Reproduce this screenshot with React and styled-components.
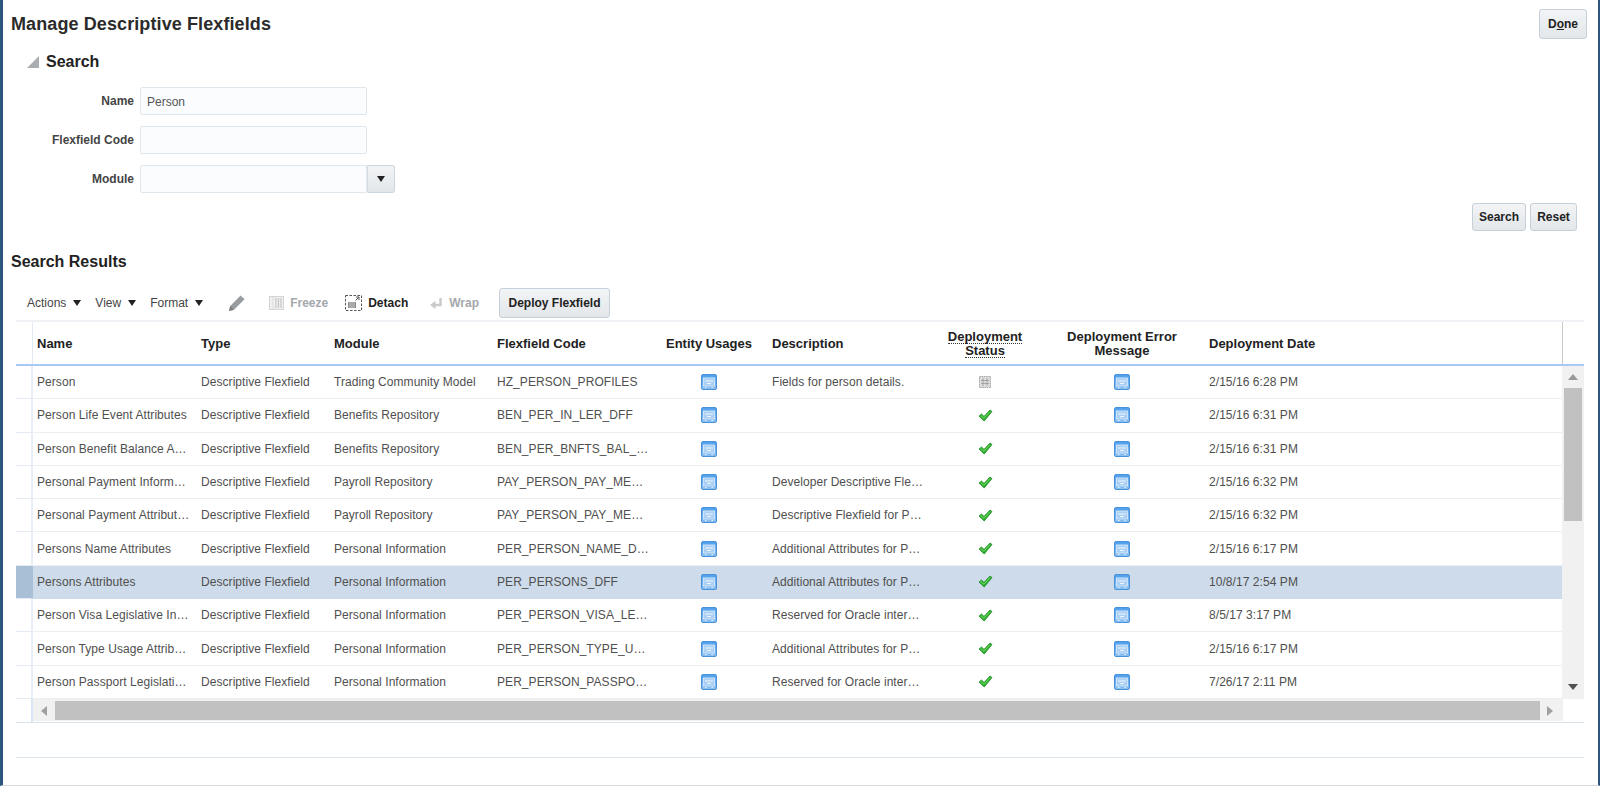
import React from "react";
import styled, { createGlobalStyle } from "styled-components";

const Global = createGlobalStyle`
  html, body { margin: 0; padding: 0; background: #fff; }
  body { font-family: "Liberation Sans", Arial, sans-serif; font-size: 12px; color: #333; }
`;

const COLS = "16px 165px 133px 163px 157px 118px 154px 130px 140px 1fr";

const Page = styled.div`
  box-sizing: border-box;
  width: 1600px;
  height: 786px;
  overflow: hidden;
  border-left: 3px solid #2c5580;
  border-right: 2px solid #2c5580;
  border-bottom: 1px solid #d9dde1;
`;
const TitleBar = styled.div`
  display: flex;
  justify-content: space-between;
  align-items: flex-start;
  padding: 9px 11px 0 8px;
`;
const Title = styled.h1`
  margin: 5px 0 0;
  font-size: 18px;
  line-height: 20px;
  font-weight: bold;
  color: #2b2b2b;
  letter-spacing: 0.1px;
`;
const Button = styled.button`
  box-sizing: border-box;
  height: ${p => p.$h || 28}px;
  width: ${p => p.$w}px;
  margin-left: ${p => p.$ml || 0}px;
  padding: 0;
  border: 1px solid #c5d0da;
  border-radius: 3px;
  background: linear-gradient(#f2f4f6, #e3e7ea);
  font: bold 12px "Liberation Sans", Arial, sans-serif;
  color: #222;
  u { text-decoration: underline; }
`;
const SearchHead = styled.div`
  display: flex;
  align-items: center;
  gap: 7px;
  margin: 13px 0 0 24px;
  height: 20px;
  font-size: 16px;
  font-weight: bold;
  color: #222;
`;
const Disclosure = styled.span`
  width: 0;
  height: 0;
  border-left: 12px solid transparent;
  border-bottom: 12px solid #a9adb1;
`;
const Form = styled.div`
  display: grid;
  grid-template-columns: 131px 1fr;
  grid-auto-rows: 28px;
  column-gap: 6px;
  row-gap: 11px;
  margin-top: 15px;
`;
const Label = styled.label`
  align-self: center;
  text-align: right;
  font-size: 12px;
  font-weight: bold;
  color: #444;
`;
const FieldRow = styled.div`
  display: flex;
`;
const Input = styled.div`
  box-sizing: border-box;
  width: 227px;
  height: 28px;
  padding: 0 6px;
  line-height: 28px;
  background: #fbfcfe;
  border: 1px solid #dfe6ec;
  border-radius: 2px;
  font-size: 12px;
  color: #555;
`;
const SelectBtn = styled.div`
  box-sizing: border-box;
  width: 28px;
  height: 28px;
  display: flex;
  align-items: center;
  justify-content: center;
  border: 1px solid #ccd5dd;
  border-left: 1px solid #d5dbe0;
  border-radius: 0 3px 3px 0;
  background: linear-gradient(#f2f4f6, #e3e7ea);
`;
const Arrow = styled.span`
  display: inline-block;
  width: 0;
  height: 0;
  border-left: 4.5px solid transparent;
  border-right: 4.5px solid transparent;
  border-top: 6px solid #222;
`;
const SearchActions = styled.div`
  display: flex;
  justify-content: flex-end;
  gap: 4px;
  margin-top: 10px;
  padding-right: 21px;
`;
const SectionTitle = styled.h2`
  margin: 21px 0 0 8px;
  font-size: 16px;
  line-height: 20px;
  font-weight: bold;
  color: #222;
`;
const Toolbar = styled.div`
  display: flex;
  align-items: center;
  height: 30px;
  margin: 16px 0 0 24px;
`;
const Menu = styled.span`
  display: inline-flex;
  align-items: center;
  gap: 7px;
  margin-right: ${p => p.$mr ?? 14}px;
  font-size: 12px;
  color: #444;
`;
const Tool = styled.span`
  display: inline-flex;
  align-items: center;
  gap: ${p => p.$gap || 6}px;
  margin-left: ${p => p.$ml || 0}px;
  font-size: 12px;
  font-weight: bold;
  color: ${p => (p.$off ? "#a4a8ac" : "#222")};
`;
const TableWrap = styled.div`
  margin: 2px 14px 0 13px;
  border-top: 2px solid #eef0f3;
`;
const HeaderRow = styled.div`
  display: grid;
  grid-template-columns: ${COLS} 22px;
  height: 42px;
  border-bottom: 2px solid #a9c9f2;
  font-size: 13px;
  font-weight: bold;
  color: #222;
`;
const HeadCell = styled.div`
  display: flex;
  flex-direction: column;
  justify-content: center;
  align-items: ${p => (p.$center ? "center" : "flex-start")};
  padding-left: ${p => (p.$center ? 0 : p.$inset || 5)}px;
  padding-top: 2px;
  padding-right: ${p => p.$shift || 0}px;
  line-height: 14px;
  text-align: center;
  white-space: nowrap;
  border-left: ${p => (p.$gutterEdge ? "1px solid #e3eaf2" : "none")};
`;
const Dotted = styled.span`
  border-bottom: 1px dotted #333;
  line-height: 13px;
`;
const EndCell = styled.div`
  border-left: 1px solid #c8c8c8;
`;
const BodyFrame = styled.div`
  display: flex;
  height: 333px;
`;
const Rows = styled.div`
  flex: 1;
  display: grid;
  grid-auto-rows: 33.3px;
`;
const Row = styled.div`
  display: grid;
  grid-template-columns: ${COLS};
  font-size: 12px;
  letter-spacing: 0.06px;
  color: #4f4f4f;
  background: ${p => (p.$selected ? "#cddbea" : "transparent")};
`;
const Gutter = styled.div`
  background: ${p => (p.$selected ? "#a9bfd6" : "#fff")};
  border-bottom: 1px solid #e3eaf2;
  border-right: 2px solid ${p => (p.$selected ? "#a9bfd6" : "#e8eef5")};
  margin-right: -1px;
`;
const Cell = styled.div`
  display: flex;
  align-items: center;
  justify-content: ${p => (p.$center ? "center" : "flex-start")};
  padding-left: ${p => (p.$center ? 0 : p.$inset || 5)}px;
  padding-right: ${p => p.$shift || 0}px;
  white-space: nowrap;
  overflow: hidden;
  border-bottom: 1px solid ${p => (p.$selected ? "#cddbea" : "#eceef0")};
`;
const VTrack = styled.div`
  box-sizing: border-box;
  width: 22px;
  height: 333px;
  padding: 0 2px;
  background: #f1f1f1;
  display: flex;
  flex-direction: column;
  align-items: center;
`;
const VThumb = styled.div`
  width: 18px;
  height: 133px;
  background: #c1c1c1;
  margin-bottom: auto;
`;
const ArrowUp = styled.span`
  width: 0;
  height: 0;
  margin: 8px 0 8px;
  border-left: 5px solid transparent;
  border-right: 5px solid transparent;
  border-bottom: 6px solid #999;
`;
const ArrowDown = styled.span`
  width: 0;
  height: 0;
  margin: 0 0 9px;
  border-left: 5px solid transparent;
  border-right: 5px solid transparent;
  border-top: 6px solid #505050;
`;
const HScrollRow = styled.div`
  display: flex;
  height: 23px;
  border-bottom: 1px solid #d8e2ea;
`;
const HGutter = styled.div`
  width: 15px;
  border-right: 2px solid #d8e6f7;
`;
const HTrack = styled.div`
  box-sizing: border-box;
  width: 1530px;
  height: 22px;
  padding-top: 1px;
  display: flex;
  align-items: center;
  background: #f1f1f1;
`;
const HThumb = styled.div`
  width: 1485px;
  height: 19px;
  background: #c1c1c1;
`;
const ArrowLeft = styled.span`
  width: 0;
  height: 0;
  margin: 0 8px 0 8px;
  border-top: 5px solid transparent;
  border-bottom: 5px solid transparent;
  border-right: 6px solid #a0a0a0;
`;
const ArrowRight = styled.span`
  width: 0;
  height: 0;
  margin: 0 0 0 7px;
  border-top: 5px solid transparent;
  border-bottom: 5px solid transparent;
  border-left: 6px solid #a0a0a0;
`;
const FootLine = styled.div`
  height: 1px;
  margin: 34px 14px 0 13px;
  background: #dde5ec;
`;

const BlueIcon = () => (
  <svg width="16" height="16" viewBox="0 0 16 16">
    <defs>
      <linearGradient id="bi" x1="0" y1="0" x2="0" y2="1">
        <stop offset="0" stopColor="#4f9fec" />
        <stop offset="1" stopColor="#8dc1f1" />
      </linearGradient>
    </defs>
    <rect x="0.5" y="0.5" width="15" height="15" rx="1.5" fill="url(#bi)" stroke="#4a92dc" />
    <rect x="2.5" y="4" width="11" height="8" fill="#a9cff4" stroke="#dcecfb" strokeWidth="0.8" />
    <path d="M4 7h8M6 9.5h4" stroke="#eef6fd" strokeWidth="1" />
    <path d="M4 13.5h1.5M10.5 13.5H12" stroke="#e8f2fb" strokeWidth="1" />
  </svg>
);
const Check = () => (
  <svg width="15" height="13" viewBox="0 0 15 13">
    <path d="M1 7l2.5-2 2.5 2.4L12 1l2 1.6L6.2 12z" fill="#2fae2f" stroke="#1e8a2a" strokeWidth="0.8" strokeLinejoin="round" />
    <path d="M2.5 6.6L6 9.2 12 2.6" fill="none" stroke="#6fdc5c" strokeWidth="1" />
  </svg>
);
const GreyDoc = () => (
  <svg width="12" height="12" viewBox="0 0 12 12">
    <rect x="0.5" y="0.5" width="11" height="11" fill="#dcdcdc" stroke="#a8a8a8" strokeDasharray="1.5 0.7" />
    <path d="M4 2v8M8 2v8M2 4.5h8M2 7.5h8" stroke="#9a9a9a" strokeWidth="0.8" />
  </svg>
);
const Pencil = () => (
  <svg width="18" height="18" viewBox="0 0 18 18">
    <path d="M1 17l1.2-5L12.6 1.6l4 3.6L6 15.8z" fill="#9a9da0" />
    <path d="M1 17l1.2-5 3.8 3.8z" fill="#7d8083" />
  </svg>
);
const FreezeIcon = () => (
  <svg width="15" height="14" viewBox="0 0 15 14">
    <rect x="0.5" y="0.5" width="14" height="13" fill="#f0f0f0" stroke="#d4d4d4" />
    <path d="M4 1v12" stroke="#cfcfcf" strokeDasharray="1.5 1" />
    <path d="M7 2v10M9.5 2v10M12 2v10" stroke="#c6c6c6" strokeWidth="1.2" />
  </svg>
);
const DetachIcon = () => (
  <svg width="17" height="16" viewBox="0 0 17 16">
    <rect x="0.5" y="0.5" width="16" height="15" fill="none" stroke="#555" strokeDasharray="2.5 1.5" />
    <path d="M10.5 5.5L14 2M11 2h3v3" fill="none" stroke="#555" strokeWidth="1" />
    <rect x="3" y="7" width="8" height="6" fill="#8a8a8a" />
    <path d="M5 7v6M7 7v6M9 7v6" stroke="#e6e6e6" strokeWidth="0.7" />
  </svg>
);
const WrapIcon = () => (
  <svg width="14" height="13" viewBox="0 0 14 13">
    <path d="M11.5 1v7H6" fill="none" stroke="#c9c9c9" strokeWidth="2.4" />
    <path d="M6.5 4v8L1 8z" fill="#c9c9c9" />
  </svg>
);

const DF = "Descriptive Flexfield";
const PI = "Personal Information";
const D = "2/15/16 ";
const data = [
  ["Person", "Trading Community Model", "HZ_PERSON_PROFILES", "Fields for person details.", D + "6:28 PM", true],
  ["Person Life Event Attributes", "Benefits Repository", "BEN_PER_IN_LER_DFF", "", D + "6:31 PM"],
  ["Person Benefit Balance A…", "Benefits Repository", "BEN_PER_BNFTS_BAL_…", "", D + "6:31 PM"],
  ["Personal Payment Inform…", "Payroll Repository", "PAY_PERSON_PAY_ME…", "Developer Descriptive Fle…", D + "6:32 PM"],
  ["Personal Payment Attribut…", "Payroll Repository", "PAY_PERSON_PAY_ME…", "Descriptive Flexfield for P…", D + "6:32 PM"],
  ["Persons Name Attributes", PI, "PER_PERSON_NAME_D…", "Additional Attributes for P…", D + "6:17 PM"],
  ["Persons Attributes", PI, "PER_PERSONS_DFF", "Additional Attributes for P…", "10/8/17 2:54 PM"],
  ["Person Visa Legislative In…", PI, "PER_PERSON_VISA_LE…", "Reserved for Oracle inter…", "8/5/17 3:17 PM"],
  ["Person Type Usage Attrib…", PI, "PER_PERSON_TYPE_U…", "Additional Attributes for P…", D + "6:17 PM"],
  ["Person Passport Legislati…", PI, "PER_PERSON_PASSPO…", "Reserved for Oracle inter…", "7/26/17 2:11 PM"],
];

export default function App() {
  return (
    <Page>
      <Global />
      <TitleBar>
        <Title>Manage Descriptive Flexfields</Title>
        <Button $w={48} $h={30}>D<u>o</u>ne</Button>
      </TitleBar>
      <SearchHead><Disclosure />Search</SearchHead>
      <Form>
        <Label>Name</Label>
        <FieldRow><Input>Person</Input></FieldRow>
        <Label>Flexfield Code</Label>
        <FieldRow><Input /></FieldRow>
        <Label>Module</Label>
        <FieldRow><Input /><SelectBtn><Arrow /></SelectBtn></FieldRow>
      </Form>
      <SearchActions>
        <Button $w={54}>Search</Button>
        <Button $w={47}>Reset</Button>
      </SearchActions>
      <SectionTitle>Search Results</SectionTitle>
      <Toolbar>
        <Menu>Actions <Arrow /></Menu>
        <Menu>View <Arrow /></Menu>
        <Menu $mr={0}>Format <Arrow /></Menu>
        <Tool $ml={25}><Pencil /></Tool>
        <Tool $ml={23} $off><FreezeIcon />Freeze</Tool>
        <Tool $ml={17}><DetachIcon />Detach</Tool>
        <Tool $ml={21} $off><WrapIcon />Wrap</Tool>
        <Button $w={111} $h={30} $ml={20}>Deploy Flexfield</Button>
      </Toolbar>
      <TableWrap>
        <HeaderRow>
          <div />
          <HeadCell $gutterEdge $inset={4}>Name</HeadCell>
          <HeadCell $inset={4}>Type</HeadCell>
          <HeadCell $inset={4}>Module</HeadCell>
          <HeadCell $inset={4}>Flexfield Code</HeadCell>
          <HeadCell $center>Entity Usages</HeadCell>
          <HeadCell $inset={4}>Description</HeadCell>
          <HeadCell $center $shift={4}><Dotted>Deployment</Dotted><Dotted>Status</Dotted></HeadCell>
          <HeadCell $center>Deployment Error<br />Message</HeadCell>
          <HeadCell $inset={17}>Deployment Date</HeadCell>
          <EndCell />
        </HeaderRow>
        <BodyFrame>
          <Rows>
            {data.map((r, i) => {
              const sel = i === 6;
              return (
                <Row key={r[0]} $selected={sel}>
                  <Gutter $selected={sel} />
                  <Cell $selected={sel}>{r[0]}</Cell>
                  <Cell $selected={sel} $inset={4}>{DF}</Cell>
                  <Cell $selected={sel} $inset={4}>{r[1]}</Cell>
                  <Cell $selected={sel} $inset={4}>{r[2]}</Cell>
                  <Cell $selected={sel} $center><BlueIcon /></Cell>
                  <Cell $selected={sel} $inset={4}>{r[3]}</Cell>
                  <Cell $selected={sel} $center $shift={4}>{r[5] ? <GreyDoc /> : <Check />}</Cell>
                  <Cell $selected={sel} $center><BlueIcon /></Cell>
                  <Cell $selected={sel} $inset={17}>{r[4]}</Cell>
                </Row>
              );
            })}
          </Rows>
          <VTrack>
            <ArrowUp />
            <VThumb />
            <ArrowDown />
          </VTrack>
        </BodyFrame>
        <HScrollRow>
          <HGutter />
          <HTrack>
            <ArrowLeft />
            <HThumb />
            <ArrowRight />
          </HTrack>
        </HScrollRow>
      </TableWrap>
      <FootLine />
    </Page>
  );
}
